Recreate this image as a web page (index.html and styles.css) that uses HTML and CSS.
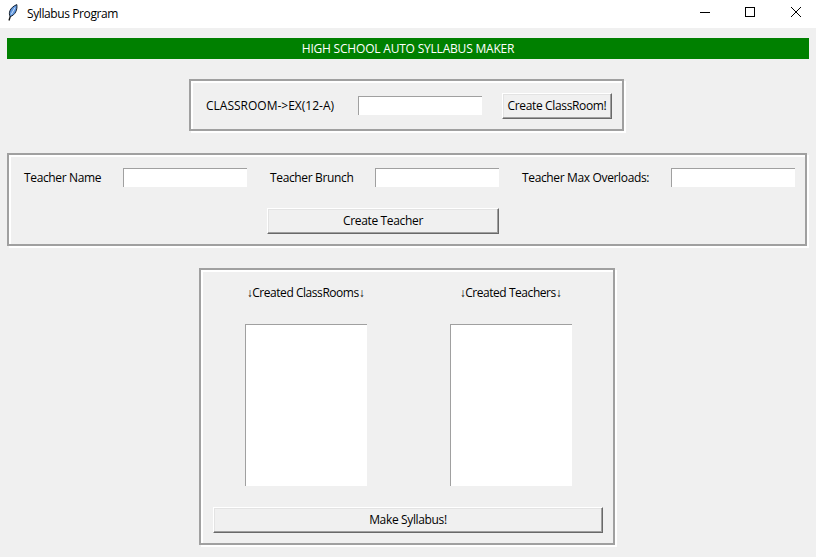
FILE: index.html
```html
<!DOCTYPE html>
<html lang="en">
<head>
  <meta charset="UTF-8">
  <title>Syllabus Program</title>
  <link rel="stylesheet" href="styles.css">
</head>
<body>
  <header class="titlebar">
    <svg class="feather" width="11" height="17" viewBox="0 0 11 17">
      <path d="M1 16.5 L2.4 12" stroke="#111" stroke-width="1.3" fill="none"/>
      <path d="M2.2 12.6 C0.2 9.5 1.6 3.5 8.8 0.6 C9.6 5.5 7.4 11 2.2 12.6 Z" fill="#5f97e0" stroke="#14202e" stroke-width="1"/>
      <path d="M3.2 10.5 L7 3.5" stroke="#cfe2f8" stroke-width="1" fill="none"/>
    </svg>
    <span class="titlebar-text">Syllabus Program</span>
    <div class="window-buttons">
      <svg class="win-btn" width="46" height="28" viewBox="0 0 46 28">
        <rect x="18" y="12" width="10" height="1" fill="#000"/>
      </svg>
      <svg class="win-btn" width="46" height="28" viewBox="0 0 46 28">
        <rect x="17.5" y="7.5" width="9" height="9" fill="none" stroke="#000"/>
      </svg>
      <svg class="win-btn" width="46" height="28" viewBox="0 0 46 28">
        <path d="M17 7 L27 17 M27 7 L17 17" stroke="#000" fill="none"/>
      </svg>
    </div>
  </header>

  <main class="content">
    <div class="banner">HIGH SCHOOL AUTO SYLLABUS MAKER</div>

    <section class="frame classroom-frame">
      <label class="classroom-label">CLASSROOM-&gt;EX(12-A)</label>
      <input class="entry" type="text">
      <button class="btn classroom-btn">Create ClassRoom!</button>
    </section>

    <section class="frame teacher-frame">
      <div class="teacher-row">
        <label class="teacher-name">Teacher Name</label>
        <input class="entry" type="text">
        <label class="teacher-brunch">Teacher Brunch</label>
        <input class="entry" type="text">
        <label class="teacher-max">Teacher Max Overloads:</label>
        <input class="entry" type="text">
      </div>
      <button class="btn teacher-btn">Create Teacher</button>
    </section>

    <section class="frame lists-frame">
      <div class="lists">
        <div class="list-col">
          <p class="list-title">↓Created ClassRooms↓</p>
          <div class="listbox"></div>
        </div>
        <div class="list-col">
          <p class="list-title">↓Created Teachers↓</p>
          <div class="listbox"></div>
        </div>
      </div>
      <button class="btn make-btn">Make Syllabus!</button>
    </section>
  </main>
</body>
</html>
```

FILE: styles.css
```css
html, body {
  height: 100%;
}
body {
  margin: 0;
  background-color: #f0f0f0;
  color: #000;
  font-family: "Open Sans", "Noto Sans", sans-serif;
  font-size: 12px;
  letter-spacing: -0.35px;
  overflow: hidden;
}
.titlebar {
  display: flex;
  align-items: center;
  height: 28px;
  background-color: #fff;
  padding-left: 8px;
}
.feather {
  flex: none;
  margin-bottom: 4px;
}
.titlebar-text {
  margin-left: 8px;
  margin-bottom: 2px;
  letter-spacing: -0.4px;
}
.window-buttons {
  display: flex;
  margin-left: auto;
  margin-right: -4px;
}
.win-btn {
  display: block;
}
.content {
  display: flex;
  flex-direction: column;
  padding-top: 10px;
}
.banner {
  margin-left: 7px;
  width: 802px;
  height: 21px;
  line-height: 21px;
  background-color: #008000;
  color: #fff;
  text-align: center;
  letter-spacing: -0.2px;
}
.frame {
  box-sizing: border-box;
  border: 2px solid #a0a0a0;
  box-shadow: 2px 2px 0 #fff, inset 2px 2px 0 #fff;
}
.entry {
  box-sizing: border-box;
  width: 124px;
  height: 19px;
  margin: 0;
  padding: 0;
  background-color: #fff;
  border: none;
  border-top: 1px solid #a0a0a0;
  border-left: 1px solid #a0a0a0;
  flex: none;
}
.btn {
  display: block;
  box-sizing: border-box;
  margin: 0;
  padding: 0 0 2px;
  background-color: #f0f0f0;
  color: #000;
  font: inherit;
  letter-spacing: inherit;
  border-style: solid;
  border-width: 1px;
  border-color: #fff #696969 #696969 #fff;
  box-shadow: inset -1px -1px 0 #a0a0a0, inset 1px 1px 0 #e3e3e3;
}
.classroom-frame {
  display: flex;
  align-items: center;
  width: 435px;
  height: 52px;
  margin: 20px 0 0 189px;
  padding: 1px 0 0 15px;
}
.classroom-label {
  width: 152px;
  letter-spacing: 0;
}
.classroom-btn {
  width: 110px;
  height: 26px;
  margin: 1px 0 0 20px;
}
.teacher-frame {
  width: 800px;
  height: 93px;
  margin: 22px 0 0 7px;
  padding: 13px 0 0 15px;
}
.teacher-row {
  display: flex;
  align-items: center;
}
.teacher-name {
  width: 99px;
}
.teacher-brunch {
  width: 105px;
  margin-left: 23px;
}
.teacher-max {
  width: 149px;
  margin-left: 23px;
}
.teacher-btn {
  width: 232px;
  height: 26px;
  margin: 21px 0 0 243px;
}
.lists-frame {
  width: 416px;
  height: 277px;
  margin: 22px 0 0 199px;
  padding: 0 0 0 12px;
}
.lists {
  display: flex;
  padding-left: 32px;
  gap: 84px;
}
.list-col {
  width: 121px;
}
.list-title {
  margin: 0;
  padding-top: 15px;
  height: 54px;
  box-sizing: border-box;
  line-height: 16px;
  text-align: center;
  white-space: nowrap;
  letter-spacing: -0.45px;
}
.listbox {
  box-sizing: border-box;
  width: 122px;
  height: 162px;
  background-color: #fff;
  border-top: 1px solid #a0a0a0;
  border-left: 1px solid #a0a0a0;
}
.make-btn {
  width: 390px;
  height: 26px;
  margin-top: 21px;
}
```
